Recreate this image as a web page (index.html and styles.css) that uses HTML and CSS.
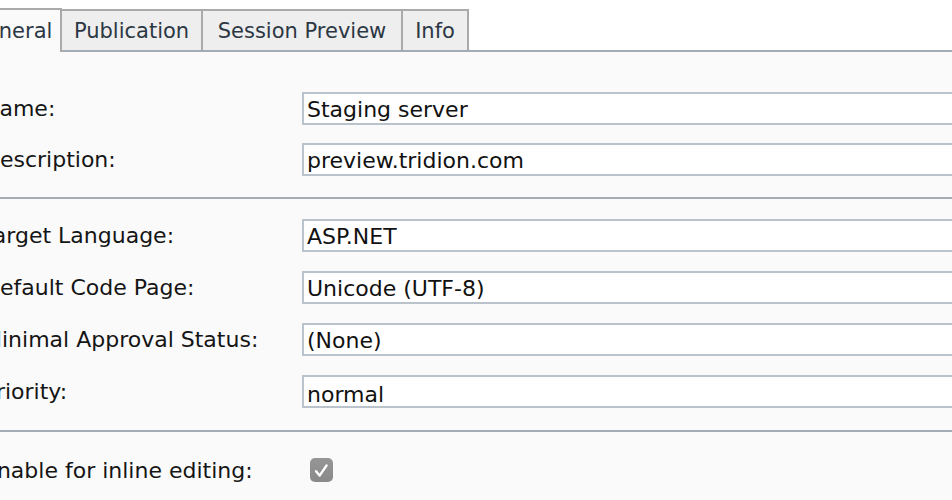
FILE: index.html
```html
<!DOCTYPE html>
<html>
<head>
<meta charset="utf-8">
<link rel="stylesheet" href="styles.css">
</head>
<body>
<div class="tabs">
  <div class="tab tab-active tab-general">General</div>
  <div class="tab tab-publication">Publication</div>
  <div class="tab tab-session">Session Preview</div>
  <div class="tab tab-info">Info</div>
</div>
<div class="content">
  <div class="group group-first">
    <div class="row"><div class="label">Name:</div><div class="field">Staging server</div></div>
    <div class="row"><div class="label">Description:</div><div class="field">preview.tridion.com</div></div>
  </div>
  <div class="group group-second">
    <div class="row"><div class="label">Target Language:</div><div class="field">ASP.NET</div></div>
    <div class="row"><div class="label">Default Code Page:</div><div class="field">Unicode (UTF-8)</div></div>
    <div class="row"><div class="label">Minimal Approval Status:</div><div class="field">(None)</div></div>
    <div class="row"><div class="label">Priority:</div><div class="field field-low">normal</div></div>
  </div>
  <div class="group group-last">
    <div class="row row-check"><div class="label">Enable for inline editing:</div>
      <div class="checkbox"><svg width="23" height="24" viewBox="0 0 23 24"><path d="M6 13.2 L9.6 17.6 L16.6 7.4" fill="none" stroke="#fff" stroke-width="2.4" stroke-linecap="round" stroke-linejoin="round"/></svg></div>
    </div>
  </div>
</div>
</body>
</html>
```
FILE: styles.css
```css
html, body {
  margin: 0;
  padding: 0;
  overflow: hidden;
  background: #fafafa;
}
body {
  font-family: "DejaVu Sans", Verdana, sans-serif;
  width: 952px;
  height: 500px;
}
.tabs {
  display: flex;
  align-items: flex-end;
  padding-top: 8px;
  margin-left: -40px;
  background: #fff;
  border-bottom: 2px solid #a3abb5;
  height: 42px;
}
.tab {
  box-sizing: border-box;
  height: 41px;
  background: #eeeeee;
  border: 2px solid #aaaaaa;
  border-left: none;
  border-bottom: none;
  color: #2c3744;
  font-size: 21px;
  line-height: 41px;
  text-align: center;
  white-space: nowrap;
}
.tab-active {
  height: 44px;
  margin-bottom: -2px;
  background: #fafafa;
  border-left: 2px solid #aaaaaa;
  line-height: 42px;
}
.tab-general { width: 102px; }
.tab-publication { width: 141px; }
.tab-session { width: 200px; }
.tab-info { width: 66px; }

.content {
  margin-left: -17px;
  width: 1100px;
}
.group {
  display: flex;
  flex-direction: column;
  border-bottom: 2px solid #a3abb5;
}
.group-first {
  padding: 40px 0 21px;
  gap: 18px;
}
.group-second {
  padding: 20px 0 22px;
  gap: 19px;
}
.group-last {
  border-bottom: none;
  padding-top: 26px;
}
.row {
  display: flex;
  align-items: center;
  height: 33px;
}
.row-check {
  height: 24px;
}
.label {
  width: 319px;
  flex: none;
  font-size: 22px;
  color: #151515;
  white-space: nowrap;
}
.field {
  box-sizing: border-box;
  width: 720px;
  height: 33px;
  background: #fff;
  border: 2px solid #bac2cc;
  padding: 0 3px;
  font-size: 22px;
  line-height: 32px;
  color: #111;
  white-space: nowrap;
}
.field-low {
  line-height: 35px;
}
.checkbox {
  margin-left: 8px;
  width: 23px;
  height: 24px;
  border-radius: 5px;
  background: linear-gradient(#969696, #8a8a8a);
}
.checkbox svg {
  display: block;
}
```
